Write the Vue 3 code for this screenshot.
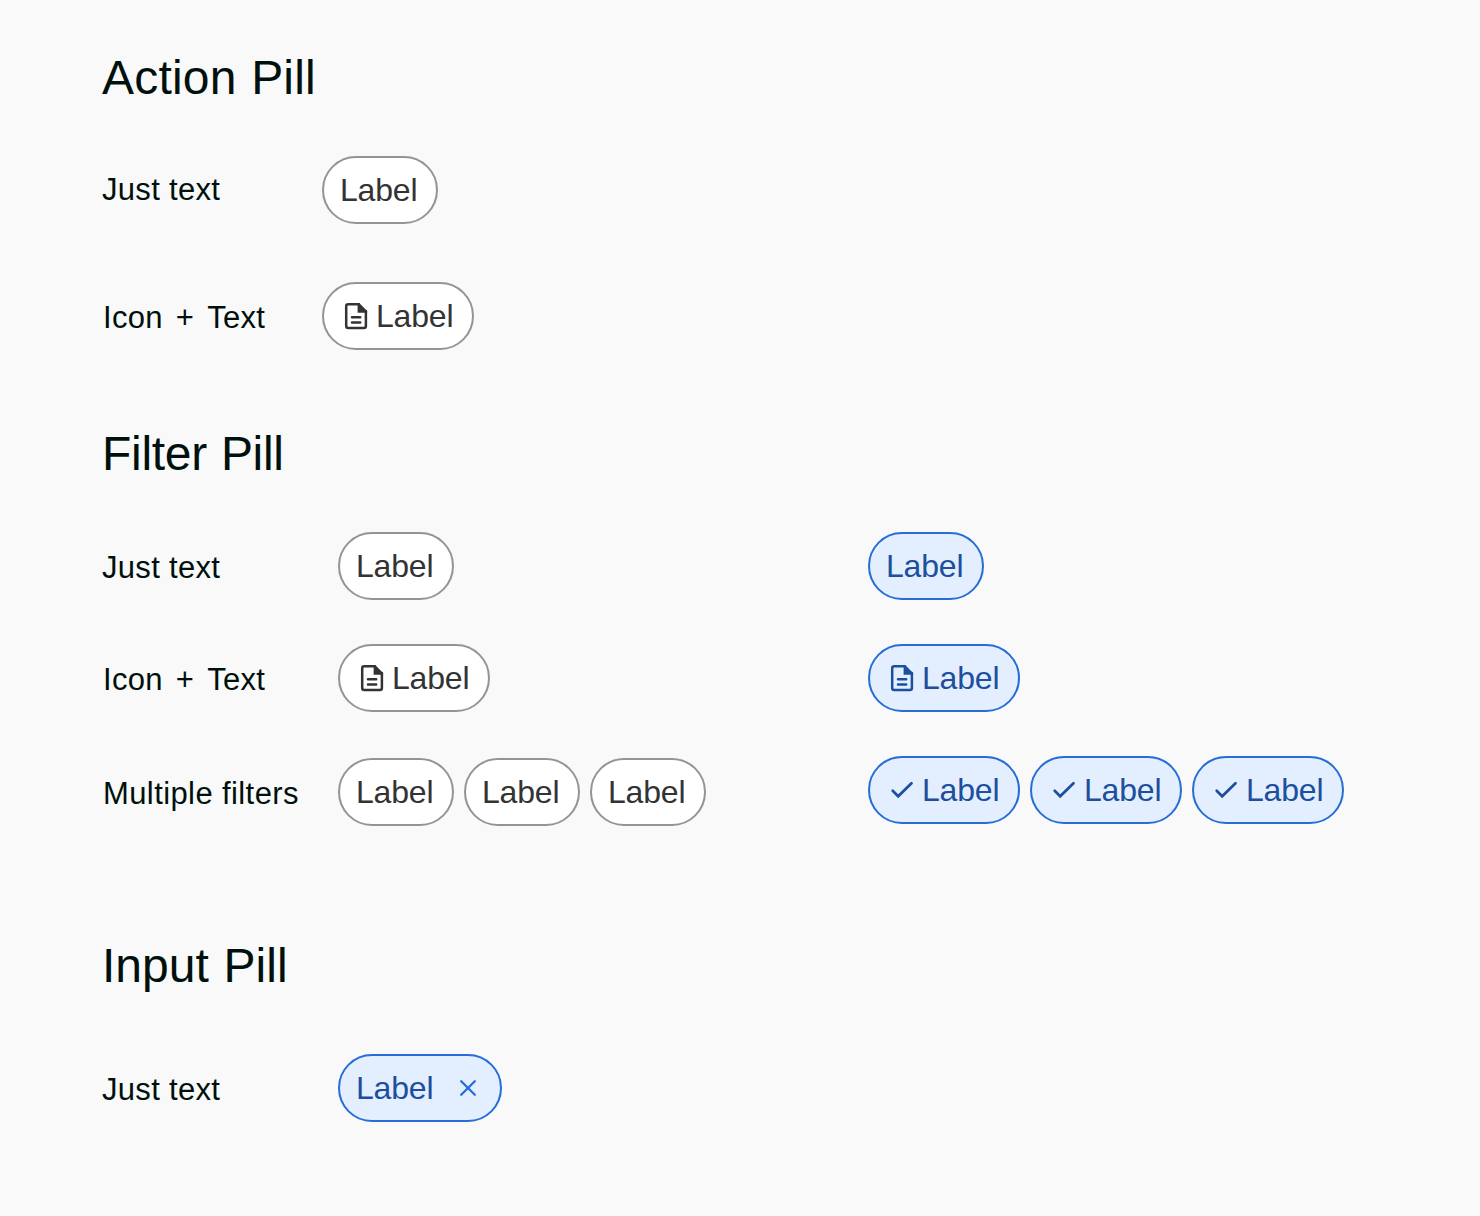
<template>
  <div class="page">
    <section v-for="s in sections" :key="s.title" class="section" :class="s.kind">
      <h1 :class="'title-' + s.kind">{{ s.title }}</h1>
      <div v-for="row in s.rows" :key="row.name" class="row" :class="row.type">
        <p class="name">
          <span v-for="w in row.name.split('|')" :key="w">{{ w }}</span>
        </p>
        <div v-for="(group, g) in row.groups" :key="g" class="group" :class="{ on: g === 1 }">
          <button v-for="(pill, i) in group" :key="i" class="pill" :class="{ active: pill.active }">
            <svg v-if="pill.icon === 'doc'" class="icon" viewBox="0 0 32 32">
              <path d="M19 4.2H8.2Q6.2 4.2 6.2 6.2V25.9Q6.2 27.9 8.2 27.9H23.9Q25.9 27.9 25.9 25.9V11" />
              <path class="fill" d="M17.6 3H19.2L27.1 10.9V12.7H17.6Z" />
              <path d="M12 17.2H20.2M12 22.4H20.2" />
            </svg>
            <svg v-if="pill.icon === 'check'" class="icon check" viewBox="0 0 32 32">
              <path d="M6.7 16.8L12.2 22.3L25.5 9.2" />
            </svg>
            <span class="text">Label</span>
            <svg v-if="pill.icon === 'close'" class="icon close" viewBox="0 0 32 32" @click="pill.active = false">
              <path d="M9.2 9.2L22.8 22.8M22.8 9.2L9.2 22.8" />
            </svg>
          </button>
        </div>
      </div>
    </section>
  </div>
</template>

<script setup>
import { reactive } from "vue";

const off = (icon) => ({ icon, active: false });
const on = (icon) => ({ icon, active: true });

const sections = reactive([
  {
    title: "Action Pill",
    kind: "action",
    rows: [
      { name: "Just text", type: "just", groups: [[off()]] },
      { name: "Icon|+|Text", type: "both", groups: [[off("doc")]] },
    ],
  },
  {
    title: "Filter Pill",
    kind: "filter",
    rows: [
      { name: "Just text", type: "just", groups: [[off()], [on()]] },
      { name: "Icon|+|Text", type: "both", groups: [[off("doc")], [on("doc")]] },
      {
        name: "Multiple filters",
        type: "multi",
        groups: [[off(), off(), off()], [on("check"), on("check"), on("check")]],
      },
    ],
  },
  {
    title: "Input Pill",
    kind: "input",
    rows: [{ name: "Just text", type: "just", groups: [[on("close")]] }],
  },
]);
</script>

<style>
body{margin:0;background:#f9f9f9}
</style>

<style scoped>
.page{box-sizing:border-box;width:1480px;height:1216px;padding:50px 102px 0;background:#f9f9f9;color:#00110d;font-family:"Liberation Sans",Arial,sans-serif}
h1{margin:0;height:56px;line-height:56px;font-size:48px;font-weight:400;white-space:nowrap}
.title-action{letter-spacing:.2px;word-spacing:1px}
.title-filter{letter-spacing:-.3px;word-spacing:1px}
.title-input{letter-spacing:0;word-spacing:1.5px}
.row{display:flex;height:68px}
.name{flex:none;box-sizing:border-box;width:236px;height:68px;margin:0;padding-top:2px;display:flex;font-size:31px;line-height:68px;letter-spacing:.3px;white-space:nowrap}
.action .name{width:220px}
.action .just .name{padding-top:0}
.both .name{gap:13px;padding-left:1px}
.multi .name{padding-top:4px;padding-left:1px;letter-spacing:.4px}
.action{margin-bottom:76px}
.action .row.just{margin:50px 0 58px}
.filter .row.just{margin-top:50px}
.filter .row.both{margin-top:44px}
.filter .row.multi{margin-top:44px}
.filter{margin-bottom:114px}
.input .row{margin-top:60px}
.group{display:flex;flex:none;gap:10px;width:530px}
.row.multi .group:not(.on){padding-top:2px}
.pill{box-sizing:border-box;display:flex;align-items:center;height:68px;padding:0 16px;border:2px solid #949494;border-radius:34px;background:#fff;color:#333;font:400 32px/64px "Liberation Sans",Arial,sans-serif}
.text{width:80px;text-align:left;letter-spacing:-.2px}
.pill.active{border-color:#266dd8;background:#e3eeff;color:#1d4f9c}
.icon{flex:none;width:32px;height:32px;margin-right:4px;fill:none;stroke:currentColor;stroke-width:2.5;stroke-linecap:round;stroke-linejoin:round}
.icon .fill{fill:currentColor;stroke:none}
.icon.check{stroke-width:2.7;stroke-linejoin:miter}
.icon.close{margin:0 0 0 16px;stroke:#266dd8;stroke-width:2.3;cursor:pointer}
</style>
